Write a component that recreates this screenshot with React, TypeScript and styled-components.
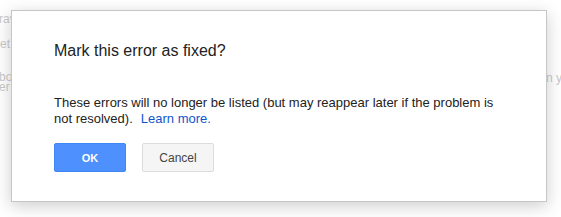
import React from "react";
import styled, { createGlobalStyle } from "styled-components";

const Global = createGlobalStyle`
  html, body { margin: 0; padding: 0; background: #ffffff; }
  body { font-family: "Liberation Sans", Arial, sans-serif; }
`;

const Page = styled.div`
  position: relative;
  width: 561px;
  height: 217px;
  overflow: hidden;
  background: #ffffff;
`;

const Backdrop = styled.div`
  display: flex;
  justify-content: space-between;
  height: 100%;
  color: #c9c9c9;
  font-size: 12px;
  line-height: 14px;
`;

const SideColumn = styled.div<{ $top: number }>`
  display: flex;
  flex-direction: column;
  align-items: flex-start;
  width: 16px;
  overflow: hidden;
  white-space: nowrap;
  padding-top: ${(p) => p.$top}px;
`;

const Fragment = styled.div<{ $gap: number; $shift?: number }>`
  margin-top: ${(p) => p.$gap}px;
  margin-left: ${(p) => p.$shift ?? 0}px;
`;

const Dialog = styled.div`
  position: absolute;
  left: 11px;
  top: 10px;
  width: 536px;
  box-sizing: border-box;
  padding: 28px 42px 29px;
  background: #ffffff;
  border: 1px solid #c6c6c6;
  box-shadow: 0 4px 16px rgba(0, 0, 0, 0.2);
  color: #222222;
`;

const Title = styled.h2`
  margin: 0;
  font-size: 16px;
  font-weight: normal;
  line-height: 24px;
  color: #222222;
`;

const Body = styled.p`
  margin: 32px 0 0;
  font-size: 13px;
  line-height: 16px;
  width: 445px;
`;

const Link = styled.a`
  color: #1155cc;
  text-decoration: none;
  margin-left: 8px;
`;

const Actions = styled.div`
  display: flex;
  gap: 16px;
  margin-top: 16px;
`;

const Button = styled.button<{ $primary?: boolean }>`
  box-sizing: border-box;
  height: 29px;
  min-width: 72px;
  padding: 0 8px;
  border-radius: 2px;
  font-family: "Liberation Sans", Arial, sans-serif;
  font-size: ${(p) => (p.$primary ? "11px" : "12px")};
  font-weight: ${(p) => (p.$primary ? "bold" : "normal")};
  color: ${(p) => (p.$primary ? "#ffffff" : "#444444")};
  background: ${(p) => (p.$primary ? "#4d90fe" : "#f5f5f5")};
  border: 1px solid ${(p) => (p.$primary ? "#3f87f5" : "#dcdcdc")};
  cursor: pointer;
`;

export default function App() {
  return (
    <Page>
      <Global />
      <Backdrop>
        <SideColumn $top={12}>
          <Fragment $gap={0} $shift={-1}>rav</Fragment>
          <Fragment $gap={11} $shift={0}>et</Fragment>
          <Fragment $gap={19} $shift={-1}>bo</Fragment>
          <Fragment $gap={-4} $shift={-1}>er</Fragment>
        </SideColumn>
        <SideColumn $top={71}>
          <Fragment $gap={0} $shift={1}>n y</Fragment>
        </SideColumn>
      </Backdrop>
      <Dialog role="dialog">
        <Title>Mark this error as fixed?</Title>
        <Body>
          These errors will no longer be listed (but may reappear later if the problem is not
          resolved).
          <Link href="#">Learn more.</Link>
        </Body>
        <Actions>
          <Button $primary>OK</Button>
          <Button>Cancel</Button>
        </Actions>
      </Dialog>
    </Page>
  );
}
